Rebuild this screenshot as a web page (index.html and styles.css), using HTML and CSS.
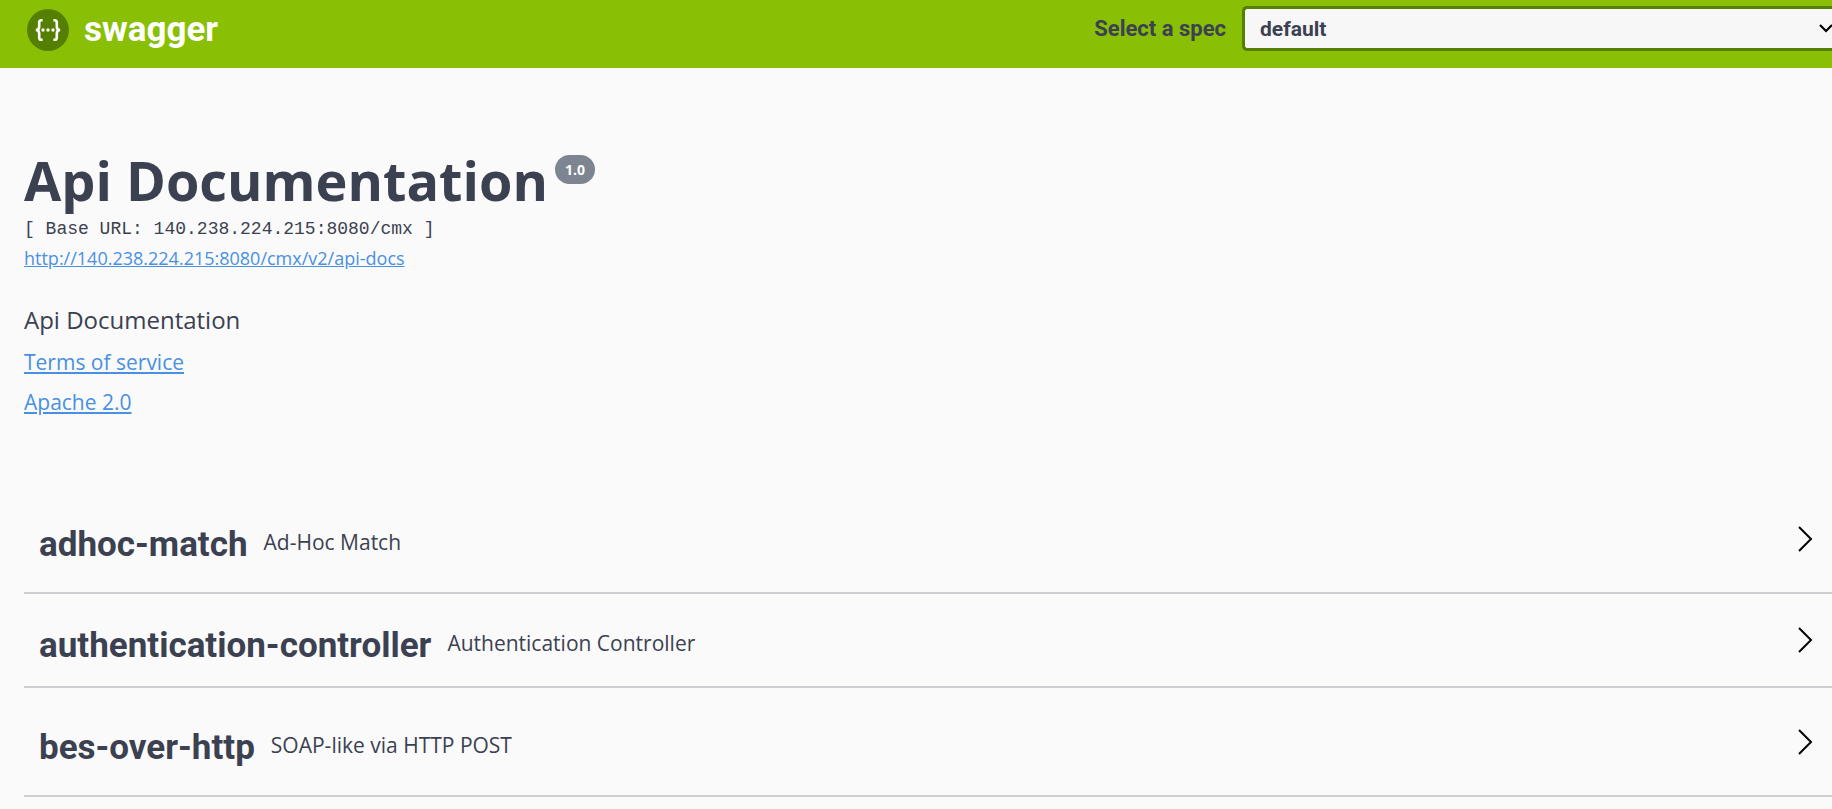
FILE: index.html
```html
<!DOCTYPE html>
<html lang="en">
<head>
<meta charset="utf-8">
<title>Swagger UI</title>
<link rel="stylesheet" href="styles.css">
</head>
<body>
<header class="topbar">
  <a class="brand" href="#">
    <svg class="brand-mark" viewBox="0 0 42 42" aria-hidden="true">
      <circle cx="21" cy="21" r="21" fill="#547f00"/>
      <g fill="none" stroke="#fff" stroke-width="2.6">
        <path d="M15.6 11.2h-1.2q-2.2 0-2.2 2.4v3.8q0 3.6-3.4 3.6q3.4 0 3.4 3.6v3.8q0 2.4 2.2 2.4h1.2"/>
        <path d="M26.4 11.2h1.2q2.2 0 2.2 2.4v3.8q0 3.6 3.4 3.6q-3.4 0-3.4 3.6v3.8q0 2.4-2.2 2.4h-1.2"/>
      </g>
      <g fill="#fff"><circle cx="16" cy="21" r="1.7"/><circle cx="21" cy="21" r="1.7"/><circle cx="26" cy="21" r="1.7"/></g>
    </svg>
    <span class="brand-name">swagger</span>
  </a>
  <form class="spec-form">
    <label class="spec-label" for="spec">Select a spec</label>
    <select class="spec-select" id="spec"><option>default</option></select>
  </form>
</header>
<main class="content">
  <section class="info">
    <div class="title-row">
      <h1 class="title">Api Documentation</h1>
      <span class="version">1.0</span>
    </div>
    <div class="base-url">[ Base URL: 140.238.224.215:8080/cmx ]</div>
    <a class="docs-link" href="#">http://140.238.224.215:8080/cmx/v2/api-docs</a>
    <p class="description">Api Documentation</p>
    <a class="info-link" href="#">Terms of service</a>
    <a class="info-link" href="#">Apache 2.0</a>
  </section>
  <section class="tags">
    <div class="tag">
      <h2 class="tag-name">adhoc-match</h2>
      <p class="tag-text">Ad-Hoc Match</p>
      <button class="expand" type="button" aria-label="Expand adhoc-match"><svg class="chevron" viewBox="0 0 16 28"><path d="M2 2l12 12L2 26"/></svg></button>
    </div>
    <div class="tag tag-compact">
      <h2 class="tag-name">authentication-controller</h2>
      <p class="tag-text">Authentication Controller</p>
      <button class="expand" type="button" aria-label="Expand authentication-controller"><svg class="chevron" viewBox="0 0 16 28"><path d="M2 2l12 12L2 26"/></svg></button>
    </div>
    <div class="tag">
      <h2 class="tag-name">bes-over-http</h2>
      <p class="tag-text">SOAP-like via HTTP POST</p>
      <button class="expand" type="button" aria-label="Expand bes-over-http"><svg class="chevron" viewBox="0 0 16 28"><path d="M2 2l12 12L2 26"/></svg></button>
    </div>
  </section>
</main>
</body>
</html>
```
FILE: styles.css
```css
* { box-sizing: border-box; }

body {
  margin: 0;
  background: #fafafa;
  color: #3b4151;
  font-family: "Open Sans", sans-serif;
}

h1, h2, p { margin: 0; }

a { color: #4990e2; }

.topbar {
  display: grid;
  grid-template-columns: 1fr auto;
  align-items: start;
  padding: 6px 0 17px 27px;
  background: #89bf04;
  font-family: Roboto, sans-serif;
  font-weight: 700;
}

.brand {
  display: flex;
  align-items: center;
  gap: 15px;
  padding-top: 3px;
  color: #fff;
  text-decoration: none;
}

.brand-mark { width: 42px; height: 42px; }

.brand-name { font-size: 35px; line-height: 42px; }

.spec-form {
  display: flex;
  align-items: center;
  gap: 16px;
}

.spec-label { font-size: 22px; }

.spec-select {
  width: 590px;
  height: 45px;
  padding: 0 40px 0 15px;
  appearance: none;
  border: 3px solid #547f00;
  border-right: 0;
  border-radius: 5px 0 0 5px;
  background: #f7f7f7 url("data:image/svg+xml,%3Csvg xmlns='http://www.w3.org/2000/svg' width='14' height='9'%3E%3Cpath d='M1 1l6 6 6-6' fill='none' stroke='%23000' stroke-width='2.2'/%3E%3C/svg%3E") no-repeat right -1px center;
  color: #3b4151;
  font: 700 21px Roboto, sans-serif;
}

.info {
  display: flex;
  flex-direction: column;
  align-items: flex-start;
  padding: 87px 24px 72px;
}

.title-row {
  display: flex;
  align-items: flex-start;
  gap: 7px;
  padding-bottom: 8px;
}

.title { font-size: 54px; line-height: 50px; }

.version {
  padding: 0 10px;
  border-radius: 15px;
  background: #7d8492;
  color: #fff;
  font-size: 14px;
  font-weight: 700;
  line-height: 29px;
}

.base-url {
  font-family: "Liberation Mono", monospace;
  font-size: 18px;
  line-height: 32px;
}

.docs-link { font-size: 18px; line-height: 26px; }

.description { padding: 29px 0 2px; font-size: 24px; line-height: 40px; }

.info-link { font-size: 21px; line-height: 40px; }

.tags { margin-left: 24px; }

.tag {
  display: flex;
  align-items: flex-start;
  gap: 16px;
  padding: 40px 19px 27px 15px;
  border-bottom: 2px solid #cdced2;
}

.tag:first-child { padding-top: 31px; }

.tag-compact { padding-top: 32px; padding-bottom: 20px; }

.tag-name {
  font-family: Roboto, sans-serif;
  font-size: 35px;
  line-height: 40px;
}

.tag-text { flex: 1; font-size: 21px; line-height: 34px; }

.expand {
  padding: 0;
  border: 0;
  background: none;
}

.chevron {
  display: block;
  width: 16px;
  height: 28px;
  fill: none;
  stroke: #000;
  stroke-width: 2;
}
```
